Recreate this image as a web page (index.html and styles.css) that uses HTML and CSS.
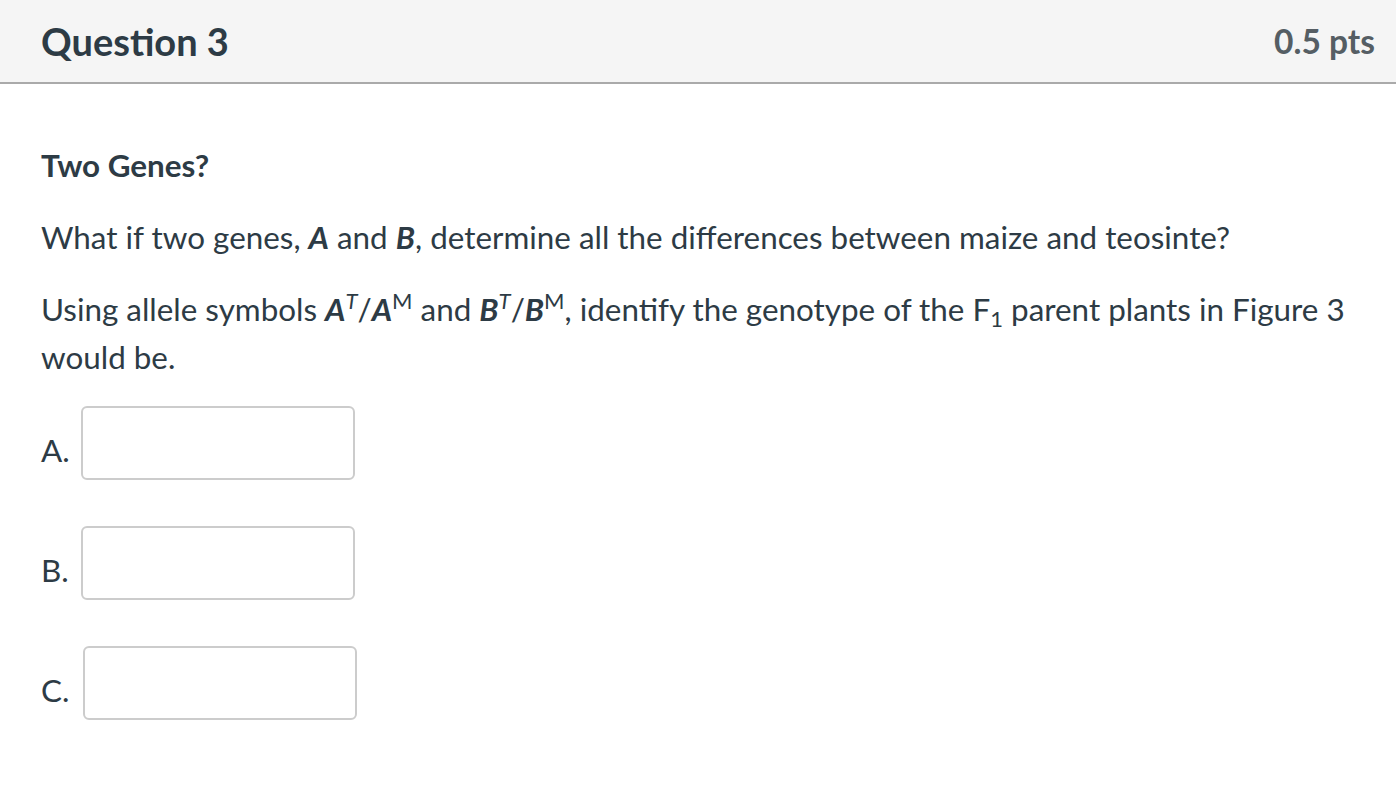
FILE: index.html
```html
<!DOCTYPE html>
<html>
<head>
<meta charset="utf-8">
<link rel="stylesheet" href="styles.css">
</head>
<body>
<div class="question">
  <div class="header">
    <h2 class="title">Question 3</h2>
    <div class="points">0.5 pts</div>
  </div>
  <div class="content">
    <p class="heading">Two Genes?</p>
    <p>What if two genes, <b><i>A</i></b> and <b><i>B</i></b>, determine all the differences between maize and teosinte?</p>
    <p>Using allele symbols <b><i>A</i></b><sup><i>T</i></sup>/<b><i>A</i></b><sup>M</sup> and <b><i>B</i></b><sup><i>T</i></sup>/<b><i>B</i></b><sup>M</sup>, identify the genotype of the F<sub>1</sub> parent plants in Figure 3 would be.</p>
    <div class="answers">
      <div class="answer"><span class="label">A.</span><span class="box"></span></div>
      <div class="answer"><span class="label">B.</span><span class="box"></span></div>
      <div class="answer c"><span class="label">C.</span><span class="box"></span></div>
    </div>
  </div>
</div>
</body>
</html>
```
FILE: styles.css
```css
html, body {
  margin: 0;
  padding: 0;
  background: #fff;
}
body {
  font-family: Lato, "Open Sans", sans-serif;
  color: #2d3b45;
}
.header {
  display: flex;
  justify-content: space-between;
  align-items: center;
  background: #f5f5f5;
  border-bottom: 2px solid #aaaaaa;
  height: 84px;
  box-sizing: border-box;
  padding: 0 21px 0 41px;
}
.title {
  margin: 0;
  font-size: 38px;
  font-weight: 700;
  color: #2d3b45;
}
.points {
  font-size: 33.5px;
  font-weight: 700;
  color: #555e64;
}
.content {
  padding: 0 41px;
  font-size: 31.4px;
  line-height: 48px;
}
.content p {
  margin: 0 0 24px;
}
.heading {
  font-weight: 700;
  padding-top: 57px;
}
.content p.heading {
  margin-bottom: 24px;
}
sup, sub {
  font-size: 22px;
  line-height: 1;
}
sup { vertical-align: 12px; }
sub { vertical-align: -6px; }
.answers {
  display: flex;
  flex-direction: column;
  gap: 46px;
  padding-top: 1px;
}
.answer {
  display: flex;
  align-items: center;
  gap: 12px;
}
.label {
  width: 28px;
  padding-top: 14px;
}
.box {
  width: 270px;
  height: 70px;
  border: 2px solid #cccccc;
  border-radius: 6px;
  background: #fff;
}
.answer.c .box {
  margin-left: 2px;
}
```
